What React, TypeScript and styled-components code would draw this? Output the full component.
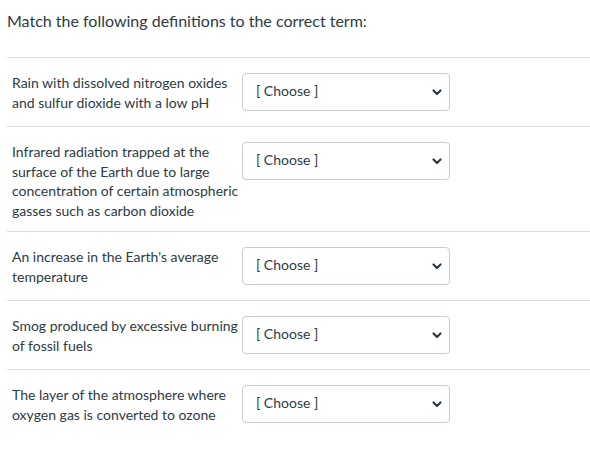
import React from "react";
import styled, { createGlobalStyle } from "styled-components";

const Global = createGlobalStyle`
  html, body { margin: 0; padding: 0; background: #fff; }
  body { font-family: Lato, "Open Sans", sans-serif; color: #2d3b45; }
`;

const Page = styled.div`
  padding: 11px 0 0 7px;
`;

const Title = styled.div`
  font-size: 16px;
  line-height: 20px;
  padding-bottom: 26px;
  border-bottom: 1px solid #dcdfe1;
`;

const Row = styled.div`
  display: flex;
  align-items: flex-start;
  padding: 15px 0 0 5px;
  border-bottom: 1px solid #dcdfe1;
  &:last-child { border-bottom: none; }
`;

const Definition = styled.div`
  width: 230px;
  font-size: 14px;
  line-height: 19.6px;
  padding-bottom: 11px;
  flex-shrink: 0;
`;

const SelectBox = styled.div`
  box-sizing: border-box;
  width: 208px;
  height: 38px;
  margin-bottom: 15px;
  border: 1px solid #c7cdd1;
  border-radius: 4px;
  display: flex;
  align-items: center;
  justify-content: space-between;
  padding: 0 6px 3px 13px;
  font-size: 14px;
  color: #2d3b45;
`;

const Label = styled.span`
  white-space: pre;
`;

const Chevron = styled.svg`
  margin-top: 3px;
`;

const ChevronIcon = () => (
  <Chevron width="12" height="12" viewBox="0 0 12 12">
    <path d="M2.5 4.5 L6 8 L9.5 4.5" fill="none" stroke="#2d3b45" strokeWidth="2.2" strokeLinecap="round" strokeLinejoin="round" />
  </Chevron>
);

const items = [
  "Rain with dissolved nitrogen oxides and sulfur dioxide with a low pH",
  "Infrared radiation trapped at the surface of the Earth due to large concentration of certain atmospheric gasses such as carbon dioxide",
  "An increase in the Earth's average temperature",
  "Smog produced by excessive burning of fossil fuels",
  "The layer of the atmosphere where oxygen gas is converted to ozone",
];

export default function App() {
  return (
    <Page>
      <Global />
      <Title>Match the following definitions to the correct term:</Title>
      {items.map((t) => (
        <Row key={t}>
          <Definition>{t}</Definition>
          <SelectBox>
            <Label>[ Choose ]</Label>
            <ChevronIcon />
          </SelectBox>
        </Row>
      ))}
    </Page>
  );
}
